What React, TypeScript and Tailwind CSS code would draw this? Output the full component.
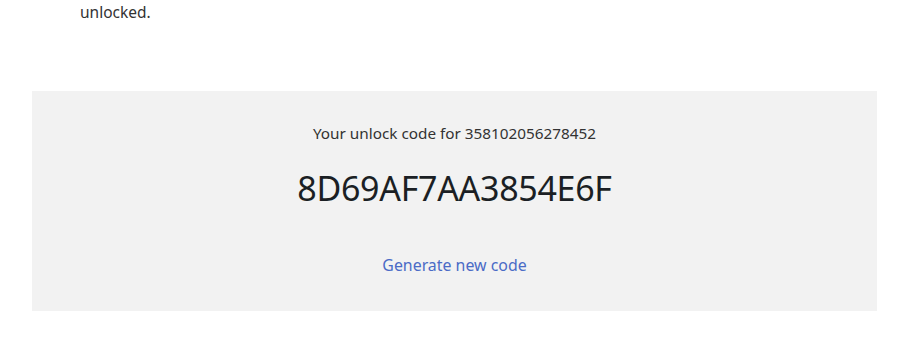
export default function App() {
  return (
    <div className="w-[910px] h-[352px] bg-white text-[#333] overflow-hidden" style={{ fontFamily: '"Noto Sans", "Open Sans", sans-serif' }}>
      {/* tail of the paragraph above */}
      <p className="pl-[80px] pt-[2px] text-[15.5px] leading-[22px] -mt-[1px]">unlocked.</p>

      {/* unlock code panel */}
      <div className="ml-[32px] mt-[68px] w-[845px] h-[220px] bg-[#f2f2f2] flex flex-col items-center">
        <p className="mt-[31px] text-[15.3px] leading-[22px] text-[#333]">Your unlock code for 358102056278452</p>
        <p className="mt-[22px] text-[34px] leading-[44px] text-[#1b1f24] tracking-[-0.3px]">8D69AF7AA3854E6F</p>
        <a href="#" className="mt-[44px] text-[15.9px] leading-[22px] text-[#4a6bc6]">Generate new code</a>
      </div>
    </div>
  );
}
